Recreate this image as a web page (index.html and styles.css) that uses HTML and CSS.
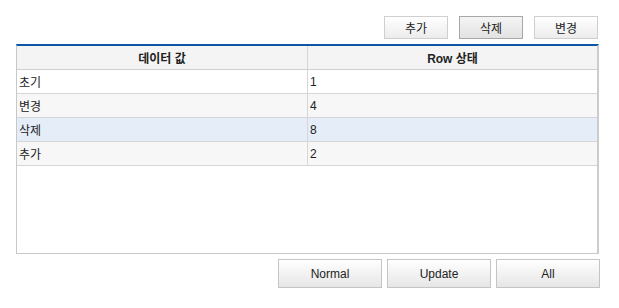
FILE: index.html
```
<!DOCTYPE html>
<html lang="ko">
<head>
<meta charset="utf-8">
<link rel="stylesheet" href="styles.css">
</head>
<body>
<div class="page">
  <div class="toolbar">
    <button class="tbtn">추가</button>
    <button class="tbtn active">삭제</button>
    <button class="tbtn">변경</button>
  </div>
  <div class="grid">
    <div class="row head">
      <div class="cell c1">데이터 값</div>
      <div class="cell c2">Row 상태</div>
    </div>
    <div class="row">
      <div class="cell c1">초기</div>
      <div class="cell c2">1</div>
    </div>
    <div class="row alt">
      <div class="cell c1">변경</div>
      <div class="cell c2">4</div>
    </div>
    <div class="row sel">
      <div class="cell c1">삭제</div>
      <div class="cell c2">8</div>
    </div>
    <div class="row alt">
      <div class="cell c1">추가</div>
      <div class="cell c2">2</div>
    </div>
  </div>
  <div class="footer">
    <button class="bbtn">Normal</button>
    <button class="bbtn">Update</button>
    <button class="bbtn">All</button>
  </div>
</div>
</body>
</html>
```
FILE: styles.css
```
html, body {
  margin: 0;
  padding: 0;
  background: #ffffff;
}
.page {
  font-family: "Liberation Sans", Arial, "Noto Sans CJK KR", sans-serif;
  font-size: 12px;
  color: #222;
  width: 619px;
  height: 308px;
}
.toolbar {
  display: flex;
  justify-content: flex-end;
  gap: 11px;
  padding: 16px 21px 0 0;
}
.tbtn {
  width: 64px;
  height: 23px;
  margin: 0;
  padding: 0;
  border: 1px solid #cfcfcf;
  background: linear-gradient(#ffffff, #ececec);
  font-family: inherit;
  font-size: 12px;
  color: #222;
}
.tbtn.active {
  border-color: #a8a8a8;
  background: linear-gradient(#f4f4f4, #e2e2e2);
}
.grid {
  margin: 5px 20px 0 16px;
  height: 207px;
  border: 1px solid #c8c8c8;
  border-top: 2px solid #0c56a6;
  border-right: 2px solid #cccccc;
}
.row {
  display: flex;
  height: 23px;
  border-bottom: 1px solid #d6d6d6;
  background: #ffffff;
}
.row.alt { background: #f7f7f7; }
.row.sel { background: #e5eef8; }
.row.head {
  background: #f4f4f4;
  font-weight: bold;
  border-bottom-color: #cfcfcf;
}
.cell {
  display: flex;
  align-items: center;
  padding-left: 2px;
  box-sizing: border-box;
}
.c1 {
  width: 291px;
  border-right: 1px solid #d6d6d6;
}
.c2 { flex: 1; }
.head .cell {
  justify-content: center;
  padding-left: 0;
}
.footer {
  display: flex;
  justify-content: flex-end;
  gap: 5px;
  padding: 5px 19px 0 0;
}
.bbtn {
  width: 104px;
  height: 29px;
  margin: 0;
  padding: 0;
  border: 1px solid #c4c4c4;
  background: linear-gradient(#ffffff, #e6e6e6);
  font-family: inherit;
  font-size: 12px;
  color: #222;
}
```
